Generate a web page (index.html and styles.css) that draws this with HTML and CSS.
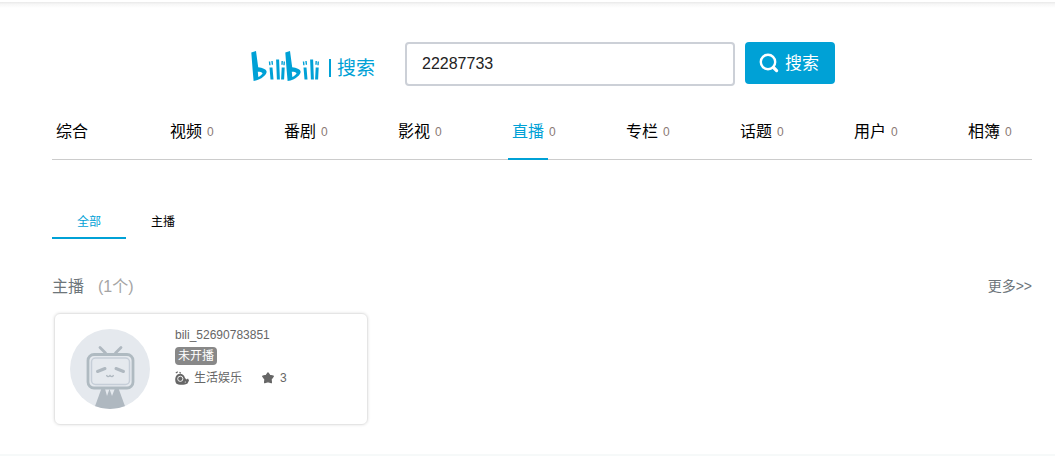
FILE: index.html
```html
<!DOCTYPE html>
<html lang="zh-CN">
<head>
<meta charset="utf-8">
<title>搜索</title>
<link rel="stylesheet" href="styles.css">
</head>
<body>
<div class="page">
  <div class="topline"></div>
  <main class="wrap">
    <form class="search">
      <a class="brand" href="#">
        <svg class="logo" viewBox="0 0 70 32" role="img" aria-label="bilibili">
          <g id="half">
            <path fill="currentColor" fill-rule="evenodd" d="M.300 2.400L5 1L7.200 17.300C11.500 17.700 15 19.200 15.600 21.400C16 24.200 11 29.600 2.600 31L1.600 19.500ZM6.800 21.800L7.300 26.900C9.300 25.900 11 24.500 11.600 23.200C10.500 22.200 8.700 21.700 6.800 21.800Z"/>
            <path fill="none" stroke="currentColor" stroke-width="3" d="M20 17.500L21 29.500M26.600 9.500L27.400 29.500M32.200 17.500L31.600 29.500"/>
            <path fill="none" stroke="currentColor" stroke-width="1.400" d="M18.500 11.500L18.900 15.300M21 11L21.400 14.800M31.200 11L31 14.800M33.300 11.500L33 15.300"/>
          </g>
          <use href="#half" x="34"/>
        </svg>
        <span class="bar"></span>
        <span class="brand-text">搜索</span>
      </a>
      <input class="query" type="text" value="22287733" aria-label="搜索关键词">
      <button class="submit" type="button">
        <svg class="lens" viewBox="0 0 20 20" aria-hidden="true">
          <circle cx="9" cy="9" r="7.200" fill="none" stroke="currentColor" stroke-width="2.400"/>
          <path d="M14.500 14.500L17.600 17.600" stroke="currentColor" stroke-width="3.200" stroke-linecap="round"/>
        </svg>
        <span class="submit-text">搜索</span>
      </button>
    </form>

    <nav class="nav">
      <a class="nav-item" href="#"><span class="name">综合</span></a>
      <a class="nav-item" href="#"><span class="name">视频</span><span class="num">0</span></a>
      <a class="nav-item" href="#"><span class="name">番剧</span><span class="num">0</span></a>
      <a class="nav-item" href="#"><span class="name">影视</span><span class="num">0</span></a>
      <a class="nav-item active" href="#"><span class="name">直播</span><span class="num">0</span></a>
      <a class="nav-item" href="#"><span class="name">专栏</span><span class="num">0</span></a>
      <a class="nav-item" href="#"><span class="name">话题</span><span class="num">0</span></a>
      <a class="nav-item" href="#"><span class="name">用户</span><span class="num">0</span></a>
      <a class="nav-item" href="#"><span class="name">相簿</span><span class="num">0</span></a>
    </nav>

    <div class="tabs">
      <a class="tab active" href="#">全部</a>
      <a class="tab" href="#">主播</a>
    </div>

    <div class="heading">
      <h2 class="title">主播</h2>
      <span class="total">(1个)</span>
      <a class="more" href="#">更多&gt;&gt;</a>
    </div>

    <article class="card">
      <svg class="avatar" viewBox="0 0 80 80" aria-hidden="true">
        <defs><clipPath id="round"><circle cx="40" cy="40" r="40"/></clipPath></defs>
        <g clip-path="url(#round)">
          <rect width="80" height="80" fill="#e5e9ee"/>
          <path d="M32 58L48 58L56 80L24 80Z" fill="#afb8c0"/>
          <path d="M34.500 58L37 67L39.500 60L42 67L45.500 58Z" fill="#e5e9ee"/>
          <path d="M30 18.500L35.500 24M51 18.500L45.500 24" stroke="#afb8c0" stroke-width="2.800" stroke-linecap="round"/>
          <rect x="18" y="25.500" width="45" height="33.500" rx="6" fill="#e5e9ee" stroke="#afbac1" stroke-width="2.800"/>
          <rect x="21.500" y="29" width="38" height="26.500" rx="4" fill="none" stroke="#c6ced8" stroke-width="1.500"/>
          <path d="M27.500 42.500L35 39.500M46 39.500L53.500 42.500" stroke="#afb8c0" stroke-width="3" stroke-linecap="round"/>
          <path d="M36.500 46Q37.500 49 40 46.500Q42.500 49 43.500 46" fill="none" stroke="#afb8c0" stroke-width="1.300"/>
        </g>
      </svg>
      <div class="info">
        <a class="user" href="#">bili_52690783851</a>
        <span class="state">未开播</span>
        <div class="meta">
          <svg class="area" viewBox="0 0 14 14" aria-hidden="true">
            <path d="M.8 2L2.800 .8M4.500 1.200L5.800 2.200" stroke="currentColor" stroke-width="1.100"/>
            <path fill="currentColor" d="M2.500 3.500C5 2 9 3 10 7L11.500 8.500L13 7.500L14 9.500L12.500 12.500C10 14.300 3 14.300 1.200 12.500C-.5 9.500 0 5.500 2.500 3.500Z"/>
            <circle cx="5.300" cy="7.800" r="2.600" fill="none" stroke="#fff" stroke-width=".9"/>
            <circle cx="10.300" cy="11" r=".6" fill="#fff"/>
          </svg>
          <span>生活娱乐</span>
          <svg class="star" viewBox="0 0 12 12" aria-hidden="true">
            <path fill="currentColor" stroke="currentColor" stroke-width="1.400" stroke-linejoin="round" d="M6 1L7.700 3.500L11.200 4.300L9 7.300L9.300 10.600L6 9.600L2.700 10.600L3 7.300L.8 4.300L4.300 3.500Z"/>
          </svg>
          <span>3</span>
        </div>
      </div>
    </article>
  </main>
  <div class="bottomline"></div>
</div>
</body>
</html>
```
FILE: styles.css
```css
* { box-sizing: border-box; }

body {
  margin: 0;
  background: #fff;
  color: #000;
  font-family: "Liberation Sans", "Noto Sans CJK SC", sans-serif;
  font-size: 12px;
}

a { color: inherit; text-decoration: none; }
svg { display: block; flex: none; }

.page {
  display: flex;
  flex-direction: column;
  min-height: 100vh;
}

.topline {
  height: 6px;
  margin-top: 2px;
  background: linear-gradient(#e9e9e9, #f7f7f7 40%, #fff);
}

.wrap { flex: 1; padding: 34px 23px 28px 52px; }
.bottomline { height: 2px; background: #f6f9f9; }

.search {
  display: flex;
  justify-content: center;
  align-items: flex-start;
  padding-left: 2px;
}

.brand {
  display: flex;
  align-items: center;
  height: 44px;
  margin-right: 30px;
  padding-top: 4px;
  color: #00a1d6;
}

.logo { width: 70px; height: 32px; }
.bar { width: 2px; height: 18px; margin: 4px 6px 0 8px; background: #00a1d6; }
.brand-text { margin-top: 6px; font-size: 19px; line-height: 24px; }

.query {
  width: 330px;
  height: 44px;
  padding: 0 15px;
  border: 2px solid #ccd0d7;
  border-radius: 4px;
  background: #fff;
  color: #222;
  font: 16px "Liberation Sans", "Noto Sans CJK SC", sans-serif;
}

.submit {
  display: flex;
  align-items: center;
  gap: 6px;
  width: 90px;
  height: 42px;
  margin-left: 10px;
  padding: 0 14px;
  border: 0;
  border-radius: 4px;
  background: #00a1d6;
  color: #fff;
  font: 17px "Liberation Sans", "Noto Sans CJK SC", sans-serif;
}

.lens { width: 20px; height: 20px; }
.submit-text { padding-bottom: 4px; }

.nav {
  display: grid;
  grid-template-columns: repeat(8, 1fr) 68px;
  height: 74px;
  border-bottom: 1px solid #ccc;
}

.nav-item { display: flex; align-items: flex-start; }

.name {
  width: 40px;
  height: 74px;
  padding: 34px 4px 0;
  font-size: 16px;
  line-height: 24px;
}

.num {
  padding: 34px 0 0 1px;
  color: #8a7a74;
  font-size: 12px;
  line-height: 24px;
}

.nav-item.active .name { border-bottom: 2px solid #00a1d6; color: #00a1d6; }

.tabs { display: flex; margin-top: 46px; }

.tab {
  width: 74px;
  height: 33px;
  border-bottom: 2px solid transparent;
  line-height: 32px;
  text-align: center;
}

.tab.active { border-color: #00a1d6; color: #00a1d6; }

.heading {
  display: flex;
  align-items: center;
  height: 24px;
  margin-top: 34px;
}

.title { margin: 0 14px 0 0; color: #6d757a; font-size: 16px; font-weight: 400; }
.total { color: #a5a5a5; font-size: 16px; }
.more { margin-left: auto; color: #6d757a; font-size: 14px; }

.card {
  display: flex;
  gap: 25px;
  width: 314px;
  margin: 16px 0 0 2px;
  padding: 15px;
  border: 1px solid #e5e5e5;
  border-radius: 6px;
  box-shadow: 0 0 3px #e0e0e0;
}

.avatar { width: 80px; height: 80px; }

.info {
  display: flex;
  flex-direction: column;
  align-items: flex-start;
  color: #666;
  line-height: 14px;
}

.user { margin-top: -1px; }

.state {
  margin: 5px 0 4px;
  padding: 0 3px;
  border-radius: 4px;
  background: #888;
  color: #fff;
  line-height: 18px;
}

.meta { display: flex; align-items: center; line-height: 18px; }
.area { width: 14px; height: 14px; margin-right: 5px; }
.star { width: 12px; height: 12px; margin: 0 6px 0 20px; }
```
